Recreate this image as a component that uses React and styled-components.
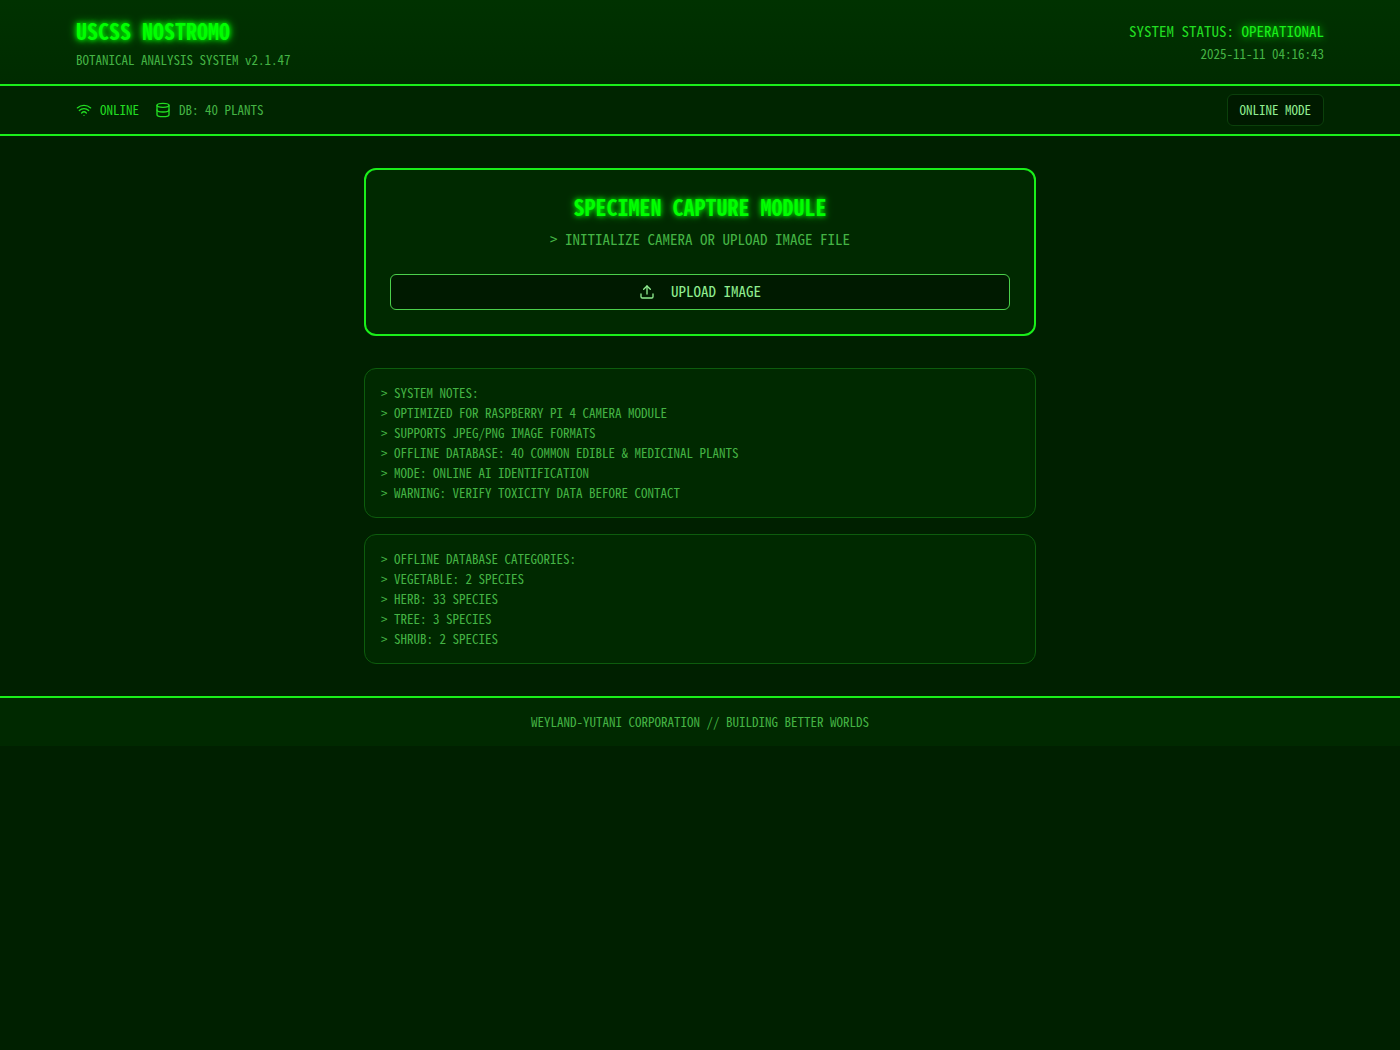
import React from 'react';
import styled, { createGlobalStyle, css } from 'styled-components';
import { Database, Upload, Wifi } from 'lucide-react';

const colors = {
  bright: '#00ff00',
  line: '#1aef1a',
  primary: '#22dd22',
  muted: '#44b444',
  text: '#90ee90',
  border: '#0d5c0d',
  buttonBorder: '#4bd04b',
  buttonBg: '#001a00',
  panel: '#002900',
};

const GlobalStyle = createGlobalStyle`
  * {
    box-sizing: border-box;
  }

  html {
    background: #002000;
  }

  body {
    margin: 0;
    font-family: 'Noto Sans Mono CJK JP', 'DejaVu Sans Mono', monospace;
    font-size: 13px;
    line-height: 16px;
    color: ${colors.muted};
  }

  h1, h2, p, ul {
    margin: 0;
    padding: 0;
  }
`;

const glow = css`
  color: ${colors.bright};
  text-shadow: 0 0 5px ${colors.bright}, 0 0 10px rgba(0, 255, 0, 0.5);
`;

const Container = styled.div`
  display: flex;
  align-items: center;
  justify-content: space-between;
  max-width: 1280px;
  margin: 0 auto;
  padding: ${props => props.$pad}px 16px;
`;

const Header = styled.header`
  background: linear-gradient(180deg, #003200, #002b00);
  border-bottom: 2px solid ${colors.line};
`;

const Brand = styled.div`
  display: flex;
  flex-direction: column;
  gap: 8px;
`;

const BrandTitle = styled.h1`
  ${glow}
  font-size: 22px;
  line-height: 28px;
  text-shadow: 0 0 5px ${colors.bright}, 0 0 10px ${colors.bright};
`;

const SystemStatus = styled.div`
  display: flex;
  flex-direction: column;
  gap: 6px;
  text-align: right;
`;

const StatusLine = styled.p`
  font-size: 15px;
  line-height: 18px;
  color: ${colors.primary};
`;

const StatusValue = styled.span`
  color: ${colors.line};
  text-shadow: 0 0 8px ${colors.bright};
`;

const StatusBar = styled.div`
  background: #002500;
  border-bottom: 2px solid ${colors.line};
`;

const Indicators = styled.div`
  display: flex;
  gap: 16px;
`;

const Indicator = styled.div`
  display: flex;
  align-items: center;
  gap: 8px;
  color: ${props => (props.$active ? colors.primary : colors.muted)};

  svg {
    color: ${colors.primary};
  }
`;

const Button = styled.button`
  display: flex;
  align-items: center;
  justify-content: center;
  padding: 0 12px;
  font-family: inherit;
  color: ${colors.text};
  background: ${colors.buttonBg};
  border-radius: 6px;
  cursor: pointer;
`;

const ModeButton = styled(Button)`
  height: 32px;
  padding-bottom: 2px;
  font-size: 13px;
  border: 1px solid #0b400b;
`;

const UploadButton = styled(Button)`
  gap: 16px;
  width: 100%;
  height: 36px;
  margin-top: 26px;
  font-size: 15px;
  border: 1px solid ${colors.buttonBorder};
`;

const ButtonLabel = styled.span`
  padding-bottom: 4px;
`;

const Main = styled.main`
  max-width: 704px;
  margin: 0 auto;
  padding: 32px 16px;
`;

const CaptureCard = styled.section`
  padding: 24px;
  margin-bottom: 32px;
  text-align: center;
  background: ${colors.panel};
  border: 2px solid ${colors.line};
  border-radius: 12px;
`;

const CaptureTitle = styled.h2`
  ${glow}
  font-size: 22px;
  line-height: 24px;
`;

const CaptureHint = styled.p`
  margin-top: 12px;
  font-size: 15px;
  line-height: 18px;
`;

const NoteList = styled.ul`
  display: flex;
  flex-direction: column;
  gap: 4px;
  padding: 16px;
  list-style: none;
  background: ${colors.panel};
  border: 1px solid ${colors.border};
  border-radius: 12px;

  & + & {
    margin-top: 16px;
  }
`;

const Footer = styled.footer`
  padding: 16px;
  text-align: center;
  background: ${colors.panel};
  border-top: 2px solid ${colors.line};
`;

const systemNotes = [
  'SYSTEM NOTES:',
  'OPTIMIZED FOR RASPBERRY PI 4 CAMERA MODULE',
  'SUPPORTS JPEG/PNG IMAGE FORMATS',
  'OFFLINE DATABASE: 40 COMMON EDIBLE & MEDICINAL PLANTS',
  'MODE: ONLINE AI IDENTIFICATION',
  'WARNING: VERIFY TOXICITY DATA BEFORE CONTACT',
];

const categories = [
  { name: 'VEGETABLE', count: 2 },
  { name: 'HERB', count: 33 },
  { name: 'TREE', count: 3 },
  { name: 'SHRUB', count: 2 },
];

const App = () => (
  <>
    <GlobalStyle />
    <Header>
      <Container $pad={16}>
        <Brand>
          <BrandTitle>USCSS NOSTROMO</BrandTitle>
          <p>BOTANICAL ANALYSIS SYSTEM v2.1.47</p>
        </Brand>
        <SystemStatus>
          <StatusLine>
            SYSTEM STATUS: <StatusValue>OPERATIONAL</StatusValue>
          </StatusLine>
          <p>2025-11-11 04:16:43</p>
        </SystemStatus>
      </Container>
    </Header>

    <StatusBar>
      <Container $pad={8}>
        <Indicators>
          <Indicator $active>
            <Wifi size={16} />
            <span>ONLINE</span>
          </Indicator>
          <Indicator>
            <Database size={16} />
            <span>DB: 40 PLANTS</span>
          </Indicator>
        </Indicators>
        <ModeButton type="button">ONLINE MODE</ModeButton>
      </Container>
    </StatusBar>

    <Main>
      <CaptureCard>
        <CaptureTitle>SPECIMEN CAPTURE MODULE</CaptureTitle>
        <CaptureHint>&gt; INITIALIZE CAMERA OR UPLOAD IMAGE FILE</CaptureHint>
        <UploadButton type="button">
          <Upload size={16} />
          <ButtonLabel>UPLOAD IMAGE</ButtonLabel>
        </UploadButton>
      </CaptureCard>

      <NoteList>
        {systemNotes.map(note => (
          <li key={note}>&gt; {note}</li>
        ))}
      </NoteList>

      <NoteList>
        <li>&gt; OFFLINE DATABASE CATEGORIES:</li>
        {categories.map(({ name, count }) => (
          <li key={name}>&gt; {name}: {count} SPECIES</li>
        ))}
      </NoteList>
    </Main>

    <Footer>
      <p>WEYLAND-YUTANI CORPORATION // BUILDING BETTER WORLDS</p>
    </Footer>
  </>
);

export default App;
